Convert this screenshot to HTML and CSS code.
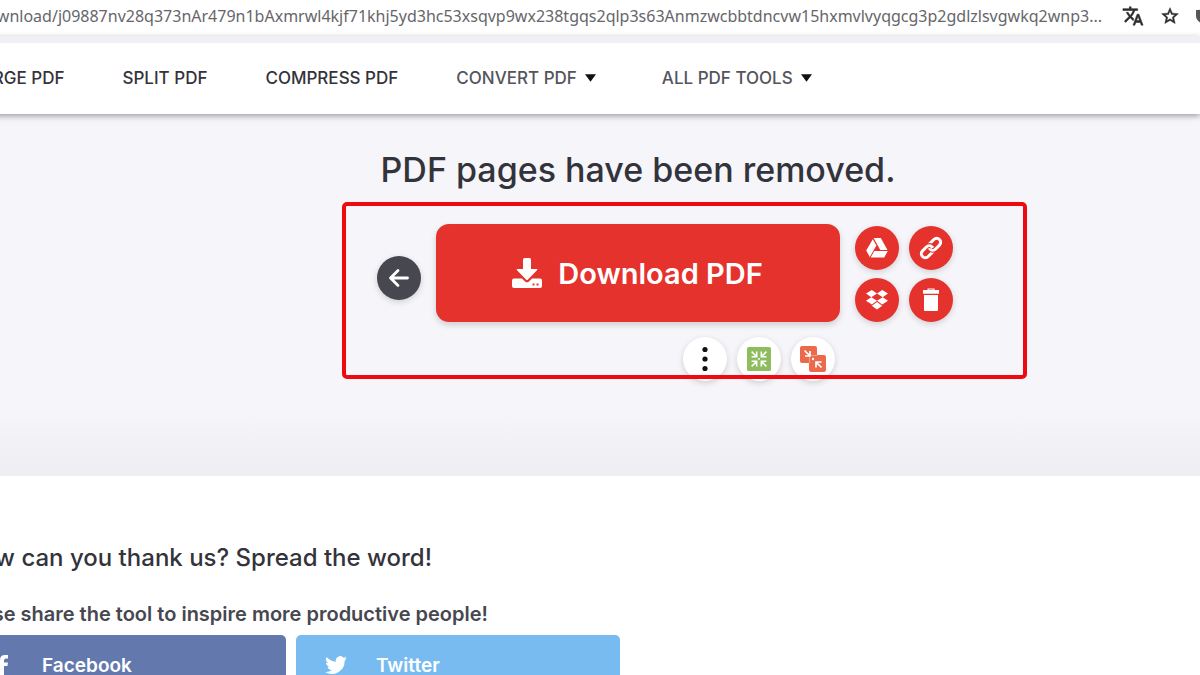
FILE: index.html
```html
<!DOCTYPE html>
<html lang="en">
<head>
<meta charset="utf-8">
<meta name="viewport" content="width=device-width, initial-scale=1">
<title>Remove PDF pages</title>
<link rel="stylesheet" href="styles.css">
</head>
<body>
<div class="browser-bar">
  <div class="address"><span class="address-text">wnload/j09887nv28q373nAr479n1bAxmrwl4kjf71khj5yd3hc53xsqvp9wx238tgqs2qlp3s63Anmzwcbbtdncvw15hxmvlvyqgcg3p2gdlzlsvgwkq2wnp3...</span></div>
  <button class="bar-button" aria-label="Translate">
    <svg width="22" height="22" viewBox="0 0 24 24" fill="#2b2b2b"><path d="M12.87 15.07l-2.54-2.51.03-.03A17.52 17.52 0 0 0 14.07 6H17V4h-7V2H8v2H1v2h11.17C11.5 7.92 10.44 9.75 9 11.35 8.07 10.32 7.3 9.19 6.69 8h-2c.73 1.63 1.73 3.17 2.98 4.56l-5.09 5.02L4 19l5-5 3.11 3.11.76-2.04zM18.5 10h-2L12 22h2l1.12-3h4.75L21 22h2l-4.5-12zm-2.62 7l1.62-4.33L19.12 17h-3.24z" stroke="#2b2b2b" stroke-width=".6"/></svg>
  </button>
  <button class="bar-button" aria-label="Bookmark">
    <svg width="20" height="20" viewBox="0 0 24 24" fill="#2b2b2b"><path d="M22 9.24l-7.19-.62L12 2 9.19 8.63 2 9.24l5.46 4.73L5.82 21 12 17.27 18.18 21l-1.63-7.03L22 9.24zM12 15.4l-3.76 2.27 1-4.28-3.32-2.88 4.38-.38L12 6.1l1.71 4.04 4.38.38-3.32 2.88 1 4.28L12 15.4z" stroke="#2b2b2b" stroke-width=".6"/></svg>
  </button>
  <button class="bar-button bar-button-last" aria-label="Extension">
    <svg width="20" height="20" viewBox="0 0 20 20" fill="#55555c"><path d="M0 4q5 0 10-2 5 2 10 2v6q0 6-10 9-10-3-10-9z"/></svg>
  </button>
</div>

<nav class="nav">
  <a class="nav-link" href="#">MERGE PDF</a>
  <a class="nav-link" href="#">SPLIT PDF</a>
  <a class="nav-link" href="#">COMPRESS PDF</a>
  <button class="nav-menu">CONVERT PDF <svg width="11" height="8" viewBox="0 0 12 8"><path d="M0 0h12L6 8z" fill="#111"/></svg></button>
  <button class="nav-menu">ALL PDF TOOLS <svg width="11" height="8" viewBox="0 0 12 8"><path d="M0 0h12L6 8z" fill="#111"/></svg></button>
</nav>

<main class="result">
  <h1 class="result-title">PDF pages have been removed.</h1>
  <div class="actions">
    <div class="actions-main">
      <button class="round round-back" aria-label="Back">
        <svg width="22" height="22" viewBox="0 0 22 22" fill="none" stroke="#fff" stroke-width="2.800" stroke-linecap="round" stroke-linejoin="round"><path d="M19.500 11H3M10 3.500L2.500 11l7.500 7.500"/></svg>
      </button>
      <button class="download">
        <svg width="30" height="30" viewBox="0 0 30 30" fill="#fff"><path d="M12.500 0h5Q19 0 19 1.500V11h5.500q1.500 0 .5 1.300L16 21.500q-1 1-2 0L5 12.300Q4 11 5.500 11H11V1.500Q11 0 12.500 0z"/><path fill-rule="evenodd" d="M2 20.500h8l3 3q2 1.700 4 0l3-3h8q2 0 2 2V28q0 2-2 2H2q-2 0-2-2v-5.500q0-2 2-2zM20.500 25.500v2h2v-2zM24.500 25.500v2h2v-2z"/></svg>
        Download PDF
      </button>
      <div class="save-grid">
        <button class="round round-red" aria-label="Save to Google Drive">
          <svg width="24" height="22" viewBox="0 0 24 22" fill="#fff"><path d="M8.600 1h7.200l6.700 12h-7.200zM7.800 2.200l3.600 6.300L4.800 20 1.200 13.600zM9.300 14h13.500l-3.600 6.500H5.700z"/></svg>
        </button>
        <button class="round round-red" aria-label="Copy link">
          <svg width="26" height="26" viewBox="0 0 26 26" fill="none"><g transform="rotate(-45 13 13)"><rect x="1" y="9" width="13.500" height="8" rx="4" stroke="#fff" stroke-width="3"/><path d="M11.500 12.200V13A4 4 0 0 0 15.500 17H21a4 4 0 0 0 4-4 4 4 0 0 0-4-4H15.500a4 4 0 0 0-4 4" stroke="#e5322d" stroke-width="5"/><rect x="11.500" y="9" width="13.500" height="8" rx="4" stroke="#fff" stroke-width="3"/><path d="M10.500 9h.5a4 4 0 0 1 3.800 4" stroke="#e5322d" stroke-width="5"/><path d="M9.500 9h1a4 4 0 0 1 4 4v.8" stroke="#fff" stroke-width="3"/></g></svg>
        </button>
        <button class="round round-red" aria-label="Save to Dropbox">
          <svg width="24" height="22" viewBox="0 0 24 22" fill="#fff"><path d="M6.800 1L12 4.600 6.300 8.200 1 4.600zM17.200 1L23 4.600l-5.300 3.600L12 4.600zM6.300 8.200L12 11.800l-5.200 3.600L1 11.800zM17.700 8.200L23 11.800l-5.800 3.600-5.200-3.600zM12 13l5.200 3.700L12 20.500l-5.200-3.800z"/></svg>
        </button>
        <button class="round round-red" aria-label="Delete">
          <svg width="18" height="24" viewBox="0 0 18 24" fill="#fff"><path fill-rule="evenodd" d="M5.500 2V.5h7V2H17v3.700H1V2zM6.700 2h4.600v-.6H6.700zM2 7h14v15q0 1-1 1H3q-1 0-1-1z"/></svg>
        </button>
      </div>
    </div>
    <div class="next-tools">
      <button class="round round-white" aria-label="More tools">
        <svg width="6" height="26" viewBox="0 0 6 26" fill="#111"><circle cx="3" cy="3.500" r="2.600"/><circle cx="3" cy="13" r="2.600"/><circle cx="3" cy="22.500" r="2.600"/></svg>
      </button>
      <button class="round round-white" aria-label="Compress PDF">
        <svg width="24" height="24" viewBox="0 0 26 26"><rect width="26" height="26" rx="2" fill="#8fbc5d"/><path d="M5 5l5 5M10.500 5v5.500H5M21 5l-5 5M15.500 5v5.500H21M5 21l5-5M5 15.500h5.500V21M21 21l-5-5M21 15.500h-5.500V21" fill="none" stroke="#fff" stroke-width="1.700"/><circle cx="13" cy="13" r="1" fill="#fff"/></svg>
      </button>
      <button class="round round-white" aria-label="Merge PDF">
        <svg width="26" height="26" viewBox="0 0 26 26"><path d="M2 0h13q2 0 2 2v7h7q2 0 2 2v13q0 2-2 2H11q-2 0-2-2v-7H2q-2 0-2-2V2q0-2 2-2z" fill="#ec6a4c"/><path d="M9.500 17V9.500H17" fill="none" stroke="#fff" stroke-width=".7" opacity=".5"/><path d="M4.500 4.500l5 5M10 5v5H5M21.500 21.500l-5-5M16 21.500V16h5.500" fill="none" stroke="#fff" stroke-width="1.700"/><circle cx="13" cy="13" r="1.200" fill="#fff"/></svg>
      </button>
    </div>
    <div class="highlight"></div>
  </div>
</main>

<section class="share">
  <h2 class="share-title"><span>How can you thank us? Spread the word!</span></h2>
  <p class="share-note"><span>Please share the tool to inspire more productive people!</span></p>
  <div class="share-buttons">
    <button class="share-button facebook">
      <svg width="22" height="20" viewBox="0 0 22 20" fill="#fff"><path d="M9 20v-9H6V7.500h3V5q0-5 5-5h3v3.500h-2q-2 0-2 2v2h4l-.6 3.500H13v9z"/></svg>
      Facebook
    </button>
    <button class="share-button twitter">
      <svg width="22" height="20" viewBox="0 0 24 22" fill="#fff"><path d="M24 3.600c-.9.400-1.800.7-2.800.8 1-.6 1.800-1.600 2.200-2.700-1 .6-2 1-3.100 1.200a4.900 4.900 0 0 0-8.400 4.500C7.700 7.200 4.100 5.200 1.700 2.200a4.900 4.900 0 0 0 1.500 6.600c-.8 0-1.600-.3-2.200-.6 0 2.300 1.600 4.400 3.900 4.900-.7.200-1.500.2-2.200.1.600 2 2.400 3.400 4.600 3.400A9.900 9.900 0 0 1 0 18.600a14 14 0 0 0 21.500-12.400c1-.7 1.800-1.600 2.500-2.600z"/></svg>
      Twitter
    </button>
  </div>
</section>
</body>
</html>
```
FILE: styles.css
```css
* { box-sizing: border-box; }
body {
  margin: 0;
  overflow-x: hidden;
  background: #fff;
  color: #33333b;
  font-family: Inter, "Liberation Sans", sans-serif;
}
button {
  border: 0;
  padding: 0;
  background: none;
  color: inherit;
  font: inherit;
  cursor: pointer;
}
svg { display: block; flex: none; }

.browser-bar {
  display: flex;
  align-items: center;
  height: 36px;
  padding-bottom: 4px;
  overflow: hidden;
}
.address {
  flex: 1;
  display: flex;
  justify-content: flex-end;
  min-width: 0;
  overflow: hidden;
  margin-right: 20px;
}
.address-text {
  flex: none;
  color: #66666a;
  font-family: "Noto Sans", sans-serif;
  font-size: 16px;
  line-height: 24px;
  white-space: nowrap;
}
.bar-button { flex: none; margin-right: 16px; }
.bar-button-last { margin-right: -16px; }

.nav {
  position: relative;
  display: flex;
  align-items: center;
  gap: 58px;
  height: 78px;
  margin-left: -33px;
  padding-bottom: 2px;
  border-top: 7px solid #efeff4;
  background: #fff;
  box-shadow: 0 2px 6px rgba(0, 0, 0, .36);
  font-size: 17px;
  font-weight: 500;
  line-height: 24px;
  white-space: nowrap;
}
.nav-link { color: #33333b; text-decoration: none; }
.nav-menu {
  display: flex;
  align-items: center;
  gap: 8px;
  margin-right: 8px;
  color: #54545c;
}

.result {
  min-height: 362px;
  padding: 32px 0 0 76px;
  background: linear-gradient(#f5f5fa 82%, #ededf2);
}
.result-title {
  margin: 0;
  color: #33333b;
  font-size: 34px;
  font-weight: 500;
  line-height: 48px;
  text-align: center;
}
.actions {
  position: relative;
  width: 685px;
  margin: 8px auto 0;
  left: 46px;
  padding: 22px 0 0 35px;
}
.actions-main { display: flex; align-items: center; gap: 15px; }
.round {
  display: flex;
  align-items: center;
  justify-content: center;
  width: 44px;
  height: 44px;
  border-radius: 50%;
  box-shadow: 0 2px 6px rgba(0, 0, 0, .16);
}
.round-back { margin-top: 10px; background: #47474f; }
.round-red { background: #e5322d; }
.round-white { background: #fff; }
.download {
  display: flex;
  align-items: center;
  justify-content: center;
  gap: 16px;
  width: 404px;
  height: 98px;
  border-radius: 13px;
  background: #e5322d;
  color: #fff;
  font-size: 29px;
  font-weight: 600;
  box-shadow: 0 3px 6px rgba(0, 0, 0, .16);
}
.save-grid {
  display: grid;
  grid-template-columns: 44px 44px;
  gap: 8px 10px;
  padding-top: 2px;
}
.next-tools {
  display: flex;
  gap: 10px;
  margin: 15px 0 0 306px;
}
.highlight {
  position: absolute;
  inset: 0 0 2px;
  border: 4px solid #ee0a0f;
  border-radius: 5px;
  pointer-events: none;
}

.share { padding-top: 64px; }
.share-title, .share-note {
  display: flex;
  justify-content: flex-end;
  margin: 0;
  white-space: nowrap;
}
.share-title {
  width: 432px;
  font-size: 24px;
  font-weight: 500;
  line-height: 36px;
}
.share-note {
  width: 488px;
  margin-top: 24px;
  color: #47474f;
  font-size: 20px;
  font-weight: 600;
  line-height: 28px;
}
.share-buttons {
  display: flex;
  gap: 10px;
  margin: 7px 0 0 -38px;
}
.share-button {
  display: flex;
  align-items: center;
  gap: 29px;
  width: 324px;
  height: 60px;
  padding-left: 29px;
  border-radius: 5px;
  color: #fff;
  font-size: 19px;
  font-weight: 600;
}
.facebook { background: #6379ae; }
.twitter { background: #78bbf0; }
```
